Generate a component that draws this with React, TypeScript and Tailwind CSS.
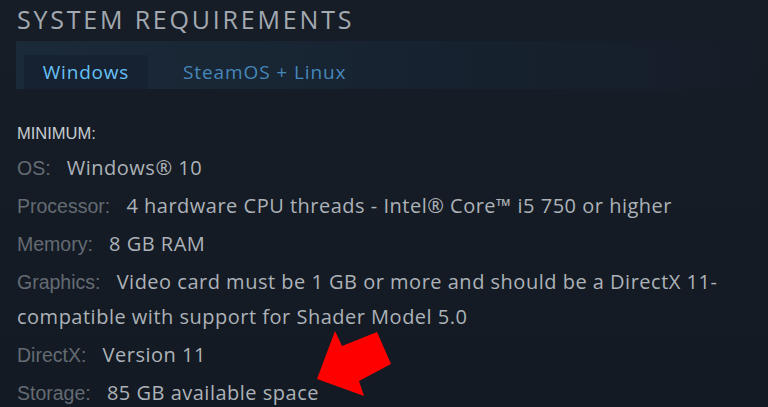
import React from "react";

const rows: { label: string; value: string }[] = [
  { label: "OS:", value: "Windows® 10" },
  { label: "Processor:", value: "4 hardware CPU threads - Intel® Core™ i5 750 or higher" },
  { label: "Memory:", value: "8 GB RAM" },
  {
    label: "Graphics:",
    value: "Video card must be 1 GB or more and should be a DirectX 11-compatible with support for Shader Model 5.0",
  },
  { label: "DirectX:", value: "Version 11" },
  { label: "Storage:", value: "85 GB available space" },
];

export default function App() {
  return (
    <div className="relative w-[768px] h-[407px] overflow-hidden bg-gradient-to-b from-[#171d26] to-[#131a23]">
      <div className="pl-[17px] pt-[4px]">
        <h2
          className="text-[25px] leading-[30px] tracking-[2.8px] text-[#a2a9b0]"
          style={{ fontFamily: '"Open Sans", sans-serif' }}
        >
          SYSTEM REQUIREMENTS
        </h2>
      </div>
      <div className="ml-[16px] mt-[7px] w-[731px] h-[48px] bg-gradient-to-r from-[#1b2a39] via-[#172331] to-[#151d28] flex items-end pl-[8px]">
        <div
          className="h-[34px] w-[124px] bg-[#162231] flex items-center justify-center text-[19px] tracking-[0.8px] text-[#66c0f4]"
          style={{ fontFamily: '"Open Sans", sans-serif' }}
        >
          Windows
        </div>
        <div
          className="h-[34px] flex items-center pl-[35px] text-[19px] tracking-[0.9px] text-[#4687b9]"
          style={{ fontFamily: '"Open Sans", sans-serif' }}
        >
          SteamOS + Linux
        </div>
      </div>
      <div className="pl-[17px] pr-[40px] pt-[34px]">
        <div
          className="text-[16.5px] leading-[20px] text-[#c6ccd2] mb-[7px]"
          style={{ fontFamily: '"Liberation Sans", Arial, sans-serif' }}
        >
          MINIMUM:
        </div>
        <ul>
          {rows.map((r) => (
            <li
              key={r.label}
              className="text-[20px] leading-[35px] mb-[3px]"
              style={{ fontFamily: '"Open Sans", sans-serif' }}
            >
              <span
                className="text-[19.5px] leading-[20px] text-[#646b73] mr-[11px]"
                style={{ fontFamily: '"Liberation Sans", Arial, sans-serif' }}
              >
                {r.label}
              </span>{" "}
              <span className="text-[#acb2b8] tracking-[0.5px]">{r.value}</span>
            </li>
          ))}
        </ul>
      </div>
      <svg className="absolute left-0 top-0 pointer-events-none" width="768" height="407">
        <polygon
          points="317,379 335,331 342,346 377,332 391,364 359,381 364,396"
          fill="#ff0000"
        />
      </svg>
    </div>
  );
}
